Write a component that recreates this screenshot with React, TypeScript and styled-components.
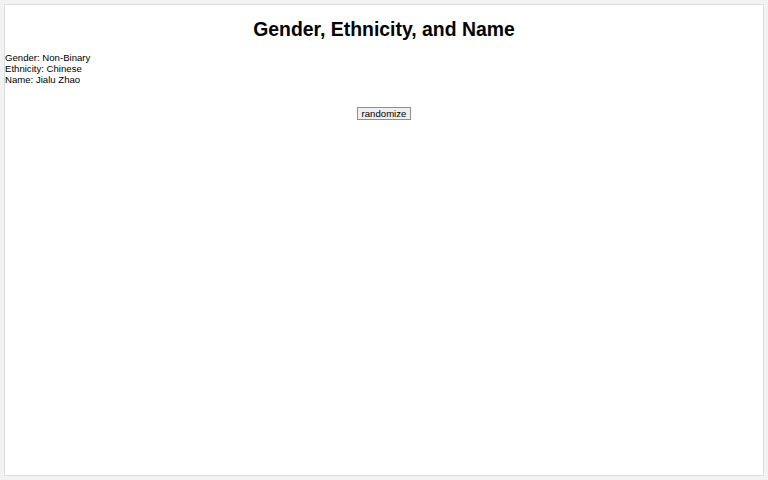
import React, { useState } from "react";
import styled, { createGlobalStyle } from "styled-components";

const Global = createGlobalStyle`
  html, body { margin: 0; padding: 0; background: #f2f2f2; }
  body { padding: 4px; font-family: "Liberation Sans", Arial, sans-serif; }
`;

const Card = styled.div`
  box-sizing: border-box;
  height: 472px;
  background: #ffffff;
  border: 1px solid #dcdcdc;
  color: #000;
  font-size: 9.6px;
  line-height: 11px;
`;

const Title = styled.h1`
  margin: 13px 0 12px;
  font-size: 19.4px;
  line-height: 22px;
  font-weight: bold;
  text-align: center;
`;

const Info = styled.div`
  display: flex;
  flex-direction: column;
`;

const Line = styled.div`
  white-space: nowrap;
`;

const ButtonRow = styled.div`
  display: flex;
  justify-content: center;
  margin-top: 22px;
`;

const Button = styled.button`
  font-family: "Liberation Sans", Arial, sans-serif;
  font-size: 9.6px;
  line-height: 11px;
  padding: 0 4px;
  background: #efefef;
  border: 1px solid #8f8f8f;
  border-radius: 0;
  color: #000;
`;

const people = [
  { gender: "Non-Binary", ethnicity: "Chinese", name: "Jialu Zhao" },
];

export default function App() {
  const [p] = useState(people[0]);
  return (
    <>
      <Global />
      <Card>
        <Title>Gender, Ethnicity, and Name</Title>
        <Info>
          <Line>Gender: {p.gender}</Line>
          <Line>Ethnicity: {p.ethnicity}</Line>
          <Line>Name: {p.name}</Line>
        </Info>
        <ButtonRow>
          <Button>randomize</Button>
        </ButtonRow>
      </Card>
    </>
  );
}
